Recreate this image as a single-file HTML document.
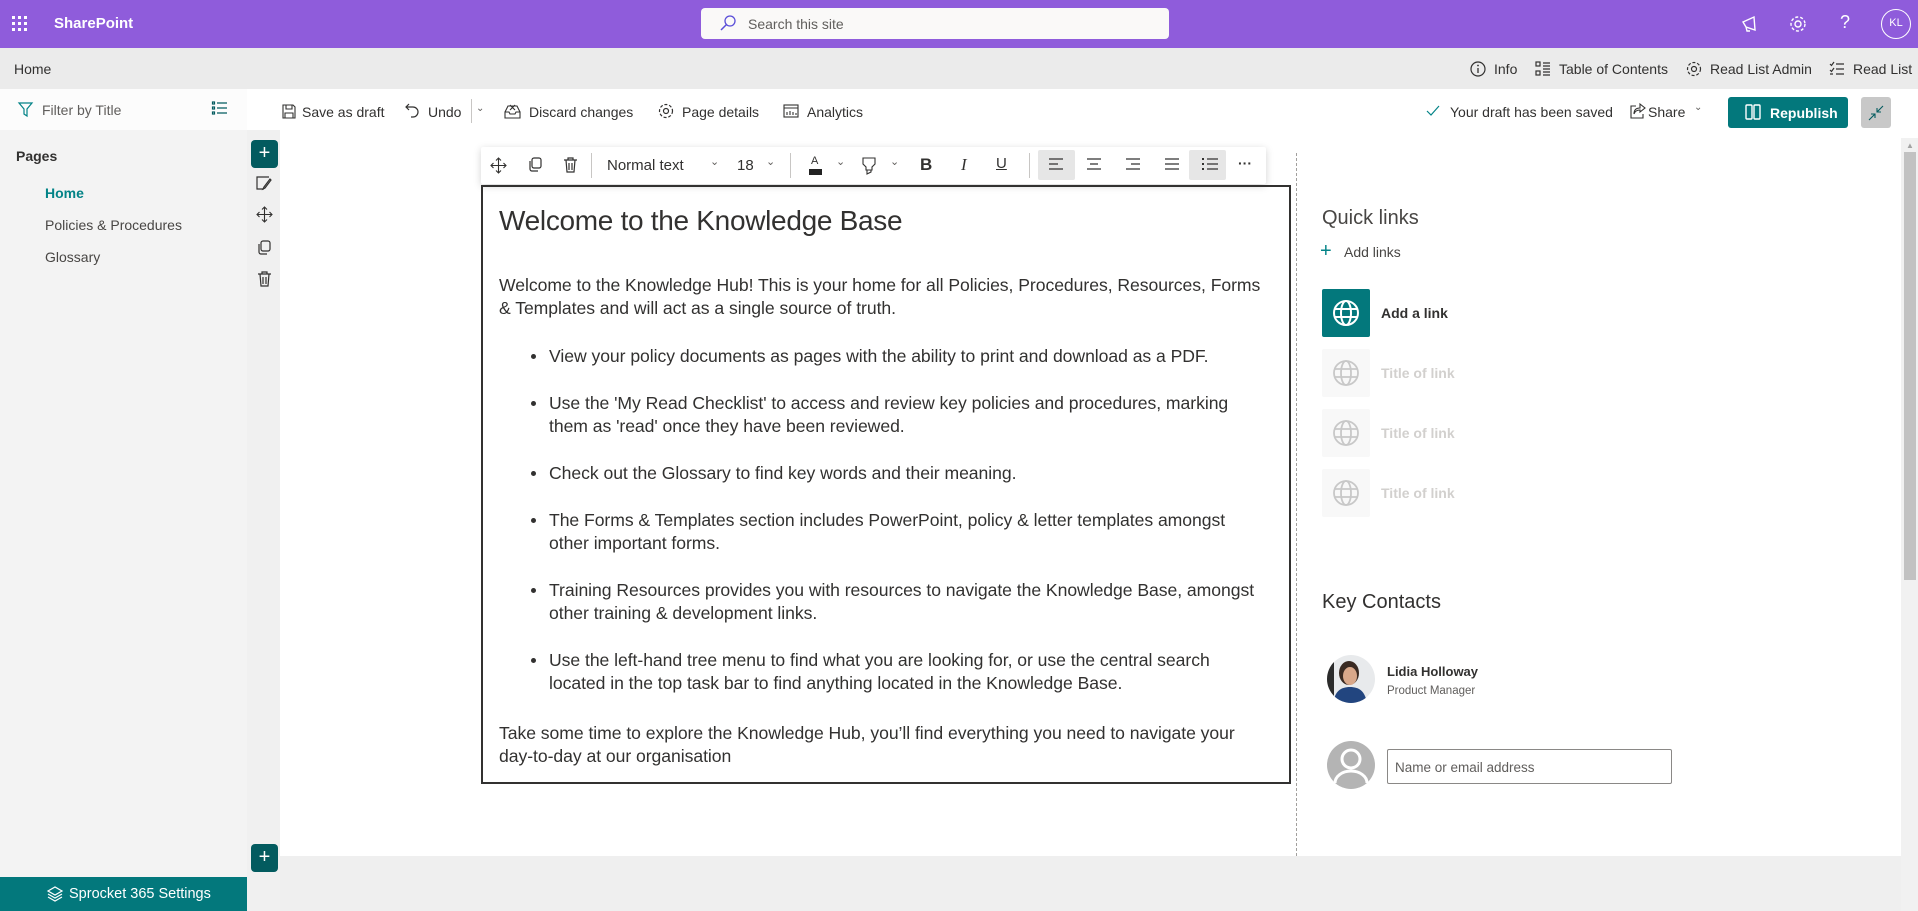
<!DOCTYPE html>
<html><head><meta charset="utf-8">
<style>
*{box-sizing:border-box;margin:0;padding:0}
body{width:1918px;height:911px;overflow:hidden;position:relative;font-family:"Liberation Sans",sans-serif;color:#323130;background:#fff}
.a{position:absolute;white-space:nowrap}
.t14{font-size:14px;line-height:18px}
svg{position:absolute;overflow:visible}
.ln{position:absolute;white-space:nowrap;font-size:17.6px;line-height:24px;color:#323130;letter-spacing:-0.05px}
.dot{position:absolute;width:5px;height:5px;border-radius:50%;background:#323130}
</style></head><body>
<div class="a" style="left:0;top:0;width:1918px;height:48px;background:#8f5cdb"></div>
<svg style="left:12px;top:16px" width="16" height="16"><g fill="#fff"><rect x="0" y="0" width="3" height="3"/><rect x="6" y="0" width="3" height="3"/><rect x="12" y="0" width="3" height="3"/><rect x="0" y="6" width="3" height="3"/><rect x="6" y="6" width="3" height="3"/><rect x="12" y="6" width="3" height="3"/><rect x="0" y="12" width="3" height="3"/><rect x="6" y="12" width="3" height="3"/><rect x="12" y="12" width="3" height="3"/></g></svg>
<div class="a" style="left:54px;top:14px;color:#fff;font-weight:bold;font-size:15px;line-height:20px">SharePoint</div>
<div class="a" style="left:701px;top:8px;width:468px;height:31px;background:#faf9f8;border-radius:4px"></div>
<svg style="left:720px;top:15px" width="16" height="16"><circle cx="10" cy="6" r="5" fill="none" stroke="#5a4ed8" stroke-width="1.3"/><line x1="6.5" y1="9.5" x2="1" y2="15" stroke="#5a4ed8" stroke-width="1.5"/></svg>
<div class="a t14" style="left:748px;top:15px;color:#605e5c">Search this site</div>
<svg style="left:1741px;top:15px" width="18" height="18"><path d="M2 7 L13 2 L14 15 L5 12 Z M5 12 L6 16 L9 16" fill="none" stroke="#fff" stroke-width="1.4"/></svg>
<svg style="left:1789px;top:15px" width="18" height="18"><circle cx="9" cy="9" r="3" fill="none" stroke="#fff" stroke-width="1.4"/><circle cx="9" cy="9" r="7" fill="none" stroke="#fff" stroke-width="1.4" stroke-dasharray="3 2"/></svg>
<div class="a" style="left:1840px;top:12px;color:#fff;font-size:18px">?</div>
<div class="a" style="left:1881px;top:9px;width:30px;height:30px;border:1.5px solid #fff;border-radius:50%;color:#fff;font-size:11px;line-height:27px;text-align:center">KL</div>
<div class="a" style="left:0;top:48px;width:1918px;height:41px;background:#ebebeb"></div>
<div class="a t14" style="left:14px;top:60px">Home</div>
<svg style="left:1470px;top:61px" width="16" height="16"><circle cx="8" cy="8" r="7" fill="none" stroke="#323130" stroke-width="1.2"/><line x1="8" y1="7" x2="8" y2="12" stroke="#323130" stroke-width="1.3"/><circle cx="8" cy="4.5" r="0.9" fill="#323130"/></svg>
<div class="a t14" style="left:1494px;top:60px">Info</div>
<svg style="left:1535px;top:61px" width="16" height="16"><g fill="none" stroke="#323130" stroke-width="1.2"><rect x="1" y="1" width="4" height="4"/><rect x="1" y="10" width="4" height="4"/><path d="M8 2h7M8 5h7M8 8h7M8 11h7M8 14h7"/></g></svg>
<div class="a t14" style="left:1559px;top:60px">Table of Contents</div>
<svg style="left:1686px;top:61px" width="16" height="16"><circle cx="8" cy="8" r="2.5" fill="none" stroke="#323130" stroke-width="1.2"/><circle cx="8" cy="8" r="6.5" fill="none" stroke="#323130" stroke-width="1.2" stroke-dasharray="3 1.8"/></svg>
<div class="a t14" style="left:1710px;top:60px">Read List Admin</div>
<svg style="left:1829px;top:61px" width="16" height="16"><g fill="none" stroke="#323130" stroke-width="1.2"><path d="M1 3l1.5 1.5L5 1M1 9l1.5 1.5L5 7M7 3h8M7 8h8M7 13h8M1 13h3"/></g></svg>
<div class="a t14" style="left:1853px;top:60px">Read List</div>
<div class="a" style="left:0;top:89px;width:247px;height:822px;background:#f3f3f3"></div>
<div class="a" style="left:0;top:89px;width:247px;height:41px;background:#fcfcfc"></div>
<svg style="left:18px;top:102px" width="15" height="16"><path d="M1 1h13L9 7v7L6 12V7z" fill="none" stroke="#038387" stroke-width="1.2"/></svg>
<div class="a t14" style="left:42px;top:101px;color:#605e5c">Filter by Title</div>
<svg style="left:212px;top:101px" width="15" height="15"><g stroke="#035b5f" stroke-width="1.2" fill="none"><rect x="0.5" y="1" width="2" height="2"/><rect x="0.5" y="6" width="2" height="2"/><rect x="0.5" y="11" width="2" height="2"/><path d="M5 2h10M5 7h10M5 12h10"/></g></svg>
<div class="a t14" style="left:16px;top:147px;font-weight:600">Pages</div>
<div class="a t14" style="left:45px;top:184px;color:#038387;font-weight:bold">Home</div>
<div class="a t14" style="left:45px;top:216px;color:#484644">Policies &amp; Procedures</div>
<div class="a t14" style="left:45px;top:248px;color:#484644">Glossary</div>
<div class="a" style="left:0;top:877px;width:247px;height:34px;background:#03787c"></div>
<svg style="left:46px;top:885px" width="18" height="18"><g fill="none" stroke="#fff" stroke-width="1.2"><path d="M2 6l7-4 7 4-7 4z"/><path d="M2 9l7 4 7-4"/><path d="M2 12l7 4 7-4"/></g></svg>
<div class="a" style="left:69px;top:885px;color:#fff;font-size:14.5px;line-height:18px">Sprocket 365 Settings</div>
<div class="a" style="left:247px;top:130px;width:33px;height:781px;background:#f0f0f0"></div>
<div class="a" style="left:251px;top:140px;width:27px;height:28px;background:#035b5f;border-radius:4px;color:#fff;font-size:20px;line-height:27px;text-align:center">+</div>
<svg style="left:256px;top:176px" width="17" height="16"><path d="M13 1H1v12h7M15 4l-6 8-2 1 1-2 6-8z" fill="none" stroke="#323130" stroke-width="1.2"/></svg>
<svg style="left:256px;top:206px" width="17" height="17"><g fill="none" stroke="#323130" stroke-width="1.1"><path d="M8.5 1v15M1 8.5h15M6 3.5l2.5-2.5 2.5 2.5M6 13.5l2.5 2.5 2.5-2.5M3.5 6L1 8.5l2.5 2.5M13.5 6l2.5 2.5-2.5 2.5"/></g></svg>
<svg style="left:256px;top:240px" width="16" height="16"><g fill="none" stroke="#323130" stroke-width="1.2"><rect x="5" y="1" width="9" height="10" rx="2"/><path d="M3 4v8a2 2 0 002 2h6"/></g></svg>
<svg style="left:257px;top:271px" width="16" height="17"><g fill="none" stroke="#323130" stroke-width="1.2"><path d="M1 3h13M5 3V1h5v2M3 3l1 12h7l1-12M6 6v7M9 6v7"/></g></svg>
<div class="a" style="left:251px;top:844px;width:27px;height:28px;background:#035b5f;border-radius:4px;color:#fff;font-size:20px;line-height:27px;text-align:center">+</div>
<div class="a" style="left:280px;top:856px;width:1623px;height:55px;background:#efefef"></div>
<svg style="left:282px;top:104px" width="14" height="15"><g fill="none" stroke="#323130" stroke-width="1.1"><path d="M1 1h10l2 2v11H1z"/><path d="M4 1v4h6V1M3 14V9h8v5"/></g></svg>
<div class="a t14" style="left:302px;top:103px">Save as draft</div>
<svg style="left:405px;top:103px" width="15" height="16"><path d="M4 1L1 4l3 3M1 4h7a5 5 0 010 10H6" fill="none" stroke="#323130" stroke-width="1.2"/></svg>
<div class="a t14" style="left:428px;top:103px">Undo</div>
<div class="a" style="left:471px;top:99px;width:1px;height:24px;background:#c8c6c4"></div>
<div class="a" style="left:476px;top:103px;font-size:10px;color:#605e5c">&#8964;</div>
<svg style="left:504px;top:103px" width="17" height="16"><g fill="none" stroke="#323130" stroke-width="1.1"><path d="M1 9h4l1 2h5l1-2h4v6H1zM1 9l3-6h9l3 6M6 2l5 5M11 2L6 7"/></g></svg>
<div class="a t14" style="left:529px;top:103px">Discard changes</div>
<svg style="left:658px;top:103px" width="16" height="16"><circle cx="8" cy="8" r="2.5" fill="none" stroke="#323130" stroke-width="1.2"/><circle cx="8" cy="8" r="6.5" fill="none" stroke="#323130" stroke-width="1.2" stroke-dasharray="3 1.8"/></svg>
<div class="a t14" style="left:682px;top:103px">Page details</div>
<svg style="left:783px;top:104px" width="16" height="14"><g fill="none" stroke="#323130" stroke-width="1.1"><rect x="1" y="1" width="14" height="12"/><path d="M1 4h14M4 11V8M7 11V7M10 11V8M13 11V9"/></g></svg>
<div class="a t14" style="left:807px;top:103px">Analytics</div>
<svg style="left:1426px;top:105px" width="14" height="12"><path d="M1 6l4 4 8-9" fill="none" stroke="#038387" stroke-width="1.2"/></svg>
<div class="a t14" style="left:1450px;top:103px">Your draft has been saved</div>
<svg style="left:1630px;top:103px" width="16" height="16"><g fill="none" stroke="#323130" stroke-width="1.1"><path d="M6 3H1v12h12v-4"/><path d="M10 1l5 4-5 4V7c-3 0-5 1-6 4 0-4 2-6 6-6z"/></g></svg>
<div class="a t14" style="left:1648px;top:103px">Share</div>
<div class="a" style="left:1694px;top:102px;font-size:10px;color:#605e5c">&#8964;</div>
<div class="a" style="left:1728px;top:97px;width:120px;height:31px;background:#03787c;border-radius:3px"></div>
<svg style="left:1745px;top:104px" width="16" height="16"><g fill="none" stroke="#fff" stroke-width="1.4"><rect x="1" y="1" width="6" height="14" rx="1"/><rect x="9" y="1" width="6" height="14" rx="1"/></g></svg>
<div class="a" style="left:1770px;top:104px;color:#fff;font-weight:bold;font-size:14px;line-height:18px">Republish</div>
<div class="a" style="left:1861px;top:97px;width:30px;height:31px;background:#c8c8c8;border-radius:3px"></div>
<svg style="left:1868px;top:105px" width="16" height="16"><g fill="none" stroke="#035b5f" stroke-width="1.1"><path d="M15 1L9 7M9 3v4h4M1 15l6-6M3 9h4v4"/></g></svg>
<div class="a" style="left:1901px;top:138px;width:17px;height:773px;background:#f1f1f1"></div>
<div class="a" style="left:1906px;top:141px;font-size:8px;color:#a3a3a3">&#9650;</div>
<div class="a" style="left:1904px;top:152px;width:12px;height:428px;background:#c2c2c2"></div>
<div class="a" style="left:1296px;top:153px;width:0;height:703px;border-left:1px dashed #a19f9d"></div>
<div class="a" style="left:481px;top:147px;width:785px;height:37px;background:#fff;box-shadow:0 2px 8px rgba(0,0,0,.18);border-radius:2px"></div>
<svg style="left:490px;top:157px" width="17" height="17"><g fill="none" stroke="#323130" stroke-width="1.1"><path d="M8.5 1v15M1 8.5h15M6 3.5l2.5-2.5 2.5 2.5M6 13.5l2.5 2.5 2.5-2.5M3.5 6L1 8.5l2.5 2.5M13.5 6l2.5 2.5-2.5 2.5"/></g></svg>
<svg style="left:527px;top:157px" width="16" height="16"><g fill="none" stroke="#323130" stroke-width="1.2"><rect x="5" y="1" width="9" height="10" rx="2"/><path d="M3 4v8a2 2 0 002 2h6"/></g></svg>
<svg style="left:563px;top:157px" width="16" height="17"><g fill="none" stroke="#323130" stroke-width="1.2"><path d="M1 3h13M5 3V1h5v2M3 3l1 12h7l1-12M6 6v7M9 6v7"/></g></svg>
<div class="a" style="left:591px;top:153px;width:1px;height:25px;background:#c8c6c4"></div>
<div class="a t14" style="left:607px;top:157px;font-size:15px">Normal text</div>
<div class="a" style="left:710px;top:155px;font-size:11px;color:#605e5c">&#8964;</div>
<div class="a t14" style="left:737px;top:157px;font-size:15px">18</div>
<div class="a" style="left:766px;top:155px;font-size:11px;color:#605e5c">&#8964;</div>
<div class="a" style="left:790px;top:153px;width:1px;height:25px;background:#c8c6c4"></div>
<div class="a" style="left:811px;top:155px;font-size:11px">A</div>
<div class="a" style="left:809px;top:169px;width:13px;height:6px;background:#222"></div>
<div class="a" style="left:836px;top:155px;font-size:11px;color:#605e5c">&#8964;</div>
<svg style="left:862px;top:157px" width="14" height="18"><path d="M1 1h12v6l-3 3v3H4v-3L1 7zM5 13v4l4-2v-2" fill="none" stroke="#323130" stroke-width="1.1"/></svg>
<div class="a" style="left:890px;top:155px;font-size:11px;color:#605e5c">&#8964;</div>
<div class="a" style="left:920px;top:155px;font-size:17px;font-weight:bold">B</div>
<div class="a" style="left:961px;top:155px;font-size:17px;font-style:italic;font-family:'Liberation Serif',serif">I</div>
<div class="a" style="left:996px;top:155px;font-size:15px;text-decoration:underline">U</div>
<div class="a" style="left:1029px;top:153px;width:1px;height:25px;background:#c8c6c4"></div>
<div class="a" style="left:1038px;top:150px;width:37px;height:30px;background:#e6e6e6;border-radius:2px"></div>
<div class="a" style="left:1189px;top:150px;width:37px;height:30px;background:#e6e6e6;border-radius:2px"></div>
<svg style="left:1049px;top:158px" width="180" height="14"><g stroke="#323130" stroke-width="1.2"><path d="M0 1h14M0 6h9M0 11h14"/><path d="M38 1h14M41 6h8M38 11h14"/><path d="M77 1h14M82 6h9M77 11h14"/><path d="M116 1h14M116 6h14M116 11h14"/><path d="M158 1h11M158 6h11M158 11h11"/></g><g fill="#323130"><rect x="153" y="0" width="2" height="2"/><rect x="153" y="5" width="2" height="2"/><rect x="153" y="10" width="2" height="2"/></g></svg>
<div class="a" style="left:1238px;top:155px;font-size:14px;font-weight:bold">···</div>
<div class="a" style="left:481px;top:185px;width:810px;height:599px;border:2px solid #323130"></div>
<div class="a" style="left:499px;top:204px;font-size:28px;line-height:34px;color:#323130;letter-spacing:-0.3px">Welcome to the Knowledge Base</div>
<div class="ln" style="left:499px;top:273px">Welcome to the Knowledge Hub! This is your home for all Policies, Procedures, Resources, Forms</div>
<div class="ln" style="left:499px;top:296px">&amp; Templates and will act as a single source of truth.</div>
<div class="dot" style="left:531px;top:354px"></div>
<div class="ln" style="left:549px;top:344px">View your policy documents as pages with the ability to print and download as a PDF.</div>
<div class="dot" style="left:531px;top:401px"></div>
<div class="ln" style="left:549px;top:391px">Use the 'My Read Checklist' to access and review key policies and procedures, marking</div>
<div class="ln" style="left:549px;top:414px">them as 'read' once they have been reviewed.</div>
<div class="dot" style="left:531px;top:471px"></div>
<div class="ln" style="left:549px;top:461px">Check out the Glossary to find key words and their meaning.</div>
<div class="dot" style="left:531px;top:518px"></div>
<div class="ln" style="left:549px;top:508px">The Forms &amp; Templates section includes PowerPoint, policy &amp; letter templates amongst</div>
<div class="ln" style="left:549px;top:531px">other important forms.</div>
<div class="dot" style="left:531px;top:588px"></div>
<div class="ln" style="left:549px;top:578px">Training Resources provides you with resources to navigate the Knowledge Base, amongst</div>
<div class="ln" style="left:549px;top:601px">other training &amp; development links.</div>
<div class="dot" style="left:531px;top:658px"></div>
<div class="ln" style="left:549px;top:648px">Use the left-hand tree menu to find what you are looking for, or use the central search</div>
<div class="ln" style="left:549px;top:671px">located in the top task bar to find anything located in the Knowledge Base.</div>
<div class="ln" style="left:499px;top:721px">Take some time to explore the Knowledge Hub, you’ll find everything you need to navigate your</div>
<div class="ln" style="left:499px;top:744px">day-to-day at our organisation</div>
<div class="a" style="left:1322px;top:206px;font-size:20px;line-height:24px;color:#484644">Quick links</div>
<div class="a" style="left:1320px;top:240px;font-size:20px;line-height:22px;color:#038387">+</div>
<div class="a t14" style="left:1344px;top:243px;color:#484644">Add links</div>
<div class="a" style="left:1322px;top:289px;width:48px;height:48px;background:#03787c;border-radius:2px"></div>
<div class="a" style="left:1322px;top:349px;width:48px;height:48px;background:#f8f8f8;border-radius:2px"></div>
<div class="a" style="left:1322px;top:409px;width:48px;height:48px;background:#f8f8f8;border-radius:2px"></div>
<div class="a" style="left:1322px;top:469px;width:48px;height:48px;background:#f8f8f8;border-radius:2px"></div>
<svg style="left:1333px;top:300px" width="26" height="26"><g fill="none" stroke="#fff" stroke-width="2"><circle cx="13" cy="13" r="12"/><ellipse cx="13" cy="13" rx="5" ry="12"/><path d="M2 9h22M2 17h22"/></g></svg>
<svg style="left:1333px;top:360px" width="26" height="26"><g fill="none" stroke="#c8c8c8" stroke-width="1.8"><circle cx="13" cy="13" r="12"/><ellipse cx="13" cy="13" rx="5" ry="12"/><path d="M2 9h22M2 17h22"/></g></svg>
<svg style="left:1333px;top:420px" width="26" height="26"><g fill="none" stroke="#c8c8c8" stroke-width="1.8"><circle cx="13" cy="13" r="12"/><ellipse cx="13" cy="13" rx="5" ry="12"/><path d="M2 9h22M2 17h22"/></g></svg>
<svg style="left:1333px;top:480px" width="26" height="26"><g fill="none" stroke="#c8c8c8" stroke-width="1.8"><circle cx="13" cy="13" r="12"/><ellipse cx="13" cy="13" rx="5" ry="12"/><path d="M2 9h22M2 17h22"/></g></svg>
<div class="a t14" style="left:1381px;top:304px;font-weight:600">Add a link</div>
<div class="a t14" style="left:1381px;top:364px;font-weight:bold;color:#d2d0ce">Title of link</div>
<div class="a t14" style="left:1381px;top:424px;font-weight:bold;color:#d2d0ce">Title of link</div>
<div class="a t14" style="left:1381px;top:484px;font-weight:bold;color:#d2d0ce">Title of link</div>
<div class="a" style="left:1322px;top:590px;font-size:20px;line-height:24px;color:#323130">Key Contacts</div>
<svg style="left:1327px;top:655px" width="48" height="48"><defs><clipPath id="c"><circle cx="24" cy="24" r="24"/></clipPath></defs><g clip-path="url(#c)"><rect width="48" height="48" fill="#e8eaec"/><rect x="0" y="0" width="7" height="48" fill="#2b2b2b"/><ellipse cx="22" cy="18" rx="10" ry="12" fill="#3a2a22"/><ellipse cx="23" cy="21" rx="7" ry="9" fill="#d9a88a"/><path d="M6 48 C8 36 14 32 23 32 C32 32 38 36 40 48 Z" fill="#22457f"/></g></svg>
<div class="a" style="left:1387px;top:664px;font-size:13px;line-height:16px;font-weight:600">Lidia Holloway</div>
<div class="a" style="left:1387px;top:684px;font-size:11.5px;line-height:14px;color:#605e5c">Product Manager</div>
<svg style="left:1327px;top:741px" width="48" height="48"><circle cx="24" cy="24" r="24" fill="#b4b4b4"/><circle cx="24" cy="18" r="9" fill="none" stroke="#fff" stroke-width="3"/><path d="M8 42a16 12 0 0132 0" fill="none" stroke="#fff" stroke-width="3"/></svg>
<div class="a" style="left:1387px;top:749px;width:285px;height:35px;border:1px solid #8a8886;border-radius:2px"></div>
<div class="a t14" style="left:1395px;top:759px;font-size:13.5px;color:#605e5c">Name or email address</div>
</body></html>
